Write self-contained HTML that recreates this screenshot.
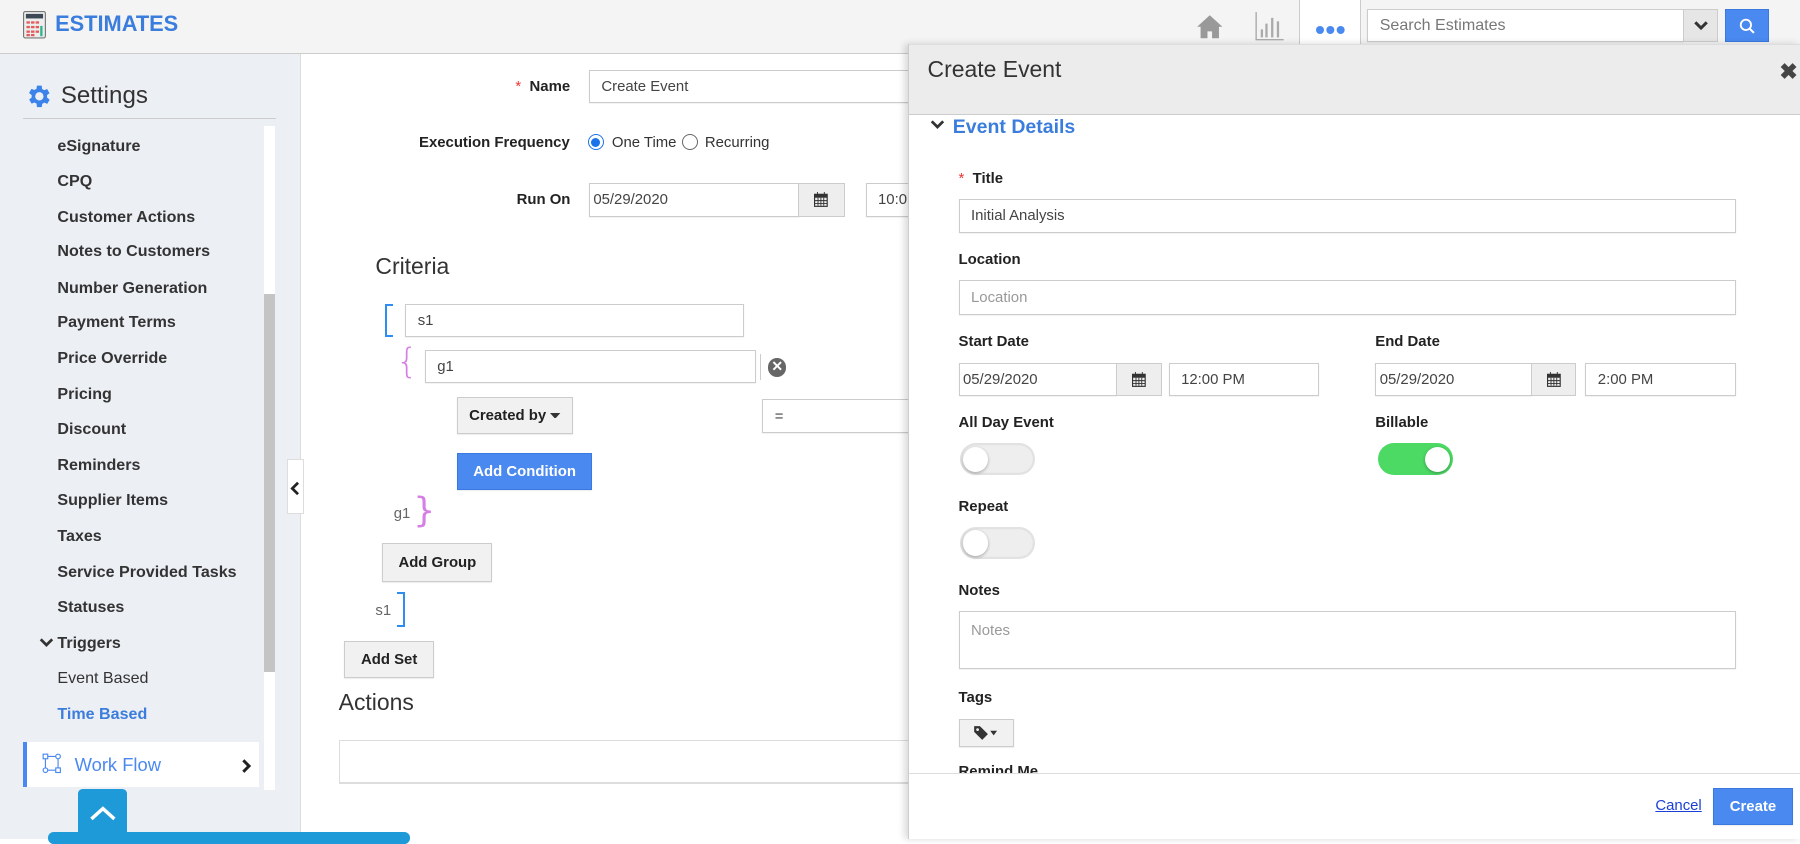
<!DOCTYPE html>
<html><head><meta charset="utf-8">
<style>
html{zoom:1.14796}
body{margin:0;width:1568px;height:731px;overflow:hidden;position:relative;font-family:"Liberation Sans",Arial,sans-serif;color:#333;background:#fff}
.a{position:absolute}
.lbl{font-weight:bold;font-size:13px;color:#222}
.inp{position:absolute;background:#fff;border:1px solid #ccc;box-sizing:border-box;font-size:13px;color:#444;padding-left:10px;display:flex;align-items:center;box-shadow:0 1px 1px rgba(0,0,0,.08)}
.btn{position:absolute;background:#f1f1f1;border:1px solid #ccc;box-sizing:border-box;font-size:13px;font-weight:bold;color:#222;display:flex;align-items:center;justify-content:center;box-shadow:0 1px 1px rgba(0,0,0,.1)}
.nav{position:absolute;left:50px;font-size:14px;font-weight:bold;color:#333}
.cal{position:absolute;background:#eee;border:1px solid #ccc;box-sizing:border-box;display:flex;align-items:center;justify-content:center}
.tog{position:absolute;width:66px;height:28px;border-radius:14px;background:#eee;box-shadow:inset 0 0 0 2px #e2e2e2}
.tog i{position:absolute;left:3px;top:3px;width:22px;height:22px;border-radius:50%;background:#fff;box-shadow:0 1px 3px rgba(0,0,0,.3)}
</style></head><body>
<div class="a" style="left:0;top:0;width:1568px;height:46px;background:#f4f4f4;border-bottom:1px solid #ccc"></div>
<svg class="a" style="left:20px;top:10px" width="20" height="24" viewBox="0 0 20 24"><rect x="0.5" y="0.5" width="19" height="23" rx="1.5" fill="#eee" stroke="#777"/><rect x="2.5" y="2.5" width="15" height="4" fill="#3d4a55"/><g fill="#e25c5c"><rect x="3" y="9" width="3" height="2"/><rect x="7" y="9" width="3" height="2"/><rect x="11" y="9" width="3" height="2"/><rect x="3" y="13" width="3" height="2"/><rect x="7" y="13" width="3" height="2"/><rect x="11" y="13" width="3" height="2"/><rect x="3" y="17" width="3" height="2"/><rect x="7" y="17" width="3" height="2"/><rect x="11" y="17" width="3" height="2"/><rect x="3" y="20" width="3" height="2"/><rect x="7" y="20" width="3" height="2"/></g><rect x="15" y="13" width="2" height="9" fill="#2bb58c"/></svg>
<div class="a" style="left:48px;top:10px;font-size:19px;font-weight:bold;color:#3b7ddd">ESTIMATES</div>
<svg class="a" style="left:1042px;top:11px" width="24" height="24" viewBox="0 0 24 24"><path d="M12 2L1 12h3v10h6v-6h4v6h6V12h3z" fill="#999"/></svg>
<svg class="a" style="left:1093px;top:10px" width="26" height="26" viewBox="0 0 26 26"><path d="M1 1v24h24" stroke="#aaa" fill="none" stroke-width="1.2"/><g fill="#aaa"><rect x="5" y="16" width="2" height="7"/><rect x="9" y="11" width="2" height="12"/><rect x="14" y="6" width="2" height="17"/><rect x="19" y="9" width="2" height="14"/></g></svg>
<div class="a" style="left:1132px;top:0;width:52px;height:46px;background:#fff;border-left:1px solid #ccc;border-right:1px solid #ccc"></div>
<div class="a" style="left:1146px;top:23px;width:7px;height:7px;border-radius:50%;background:#4a89f0;box-shadow:9px 0 0 #4a89f0,18px 0 0 #4a89f0"></div>
<div class="inp" style="left:1191px;top:8px;width:276px;height:29px;color:#777;font-size:14px">Search Estimates</div>
<div class="cal" style="left:1466px;top:8px;width:31px;height:29px;background:#e6e6e6"><svg width="14" height="10" viewBox="0 0 14 10"><path d="M2 2l5 5 5-5" stroke="#333" stroke-width="2.6" fill="none"/></svg></div>
<div class="a" style="left:1503px;top:8px;width:38px;height:29px;background:#4a89f0;border:1px solid #3b78e0;box-sizing:border-box;display:flex;align-items:center;justify-content:center"><svg width="14" height="14" viewBox="0 0 14 14"><circle cx="6" cy="6" r="4.5" stroke="#fff" stroke-width="1.6" fill="none"/><path d="M9.3 9.3L13 13" stroke="#fff" stroke-width="1.8"/></svg></div>

<div class="a" style="left:0;top:47px;width:261px;height:684px;background:#eceff4;border-right:1px solid #ddd"></div>
<svg class="a" style="left:22px;top:71px" width="25" height="25" viewBox="0 0 24 24"><path fill="#3b82ea" d="M19.4 13a7.5 7.5 0 000-2l2.1-1.6-2-3.5-2.5 1a7.6 7.6 0 00-1.7-1L15 3h-4l-.4 2.7a7.6 7.6 0 00-1.7 1l-2.5-1-2 3.5L6.6 11a7.5 7.5 0 000 2l-2.1 1.6 2 3.5 2.5-1c.5.4 1.1.8 1.700 1L11 21h4l.4-2.7c.6-.3 1.2-.6 1.7-1l2.5 1 2-3.5zM13 15.5a3.5 3.5 0 110-7 3.5 3.5 0 010 7z" transform="translate(-1 0)"/></svg>
<div class="a" style="left:53px;top:71px;font-size:21px;color:#333">Settings</div>
<div class="a" style="left:20px;top:103px;width:220px;height:1px;background:#ccc"></div>
<div class="a" style="left:230px;top:110px;width:10px;height:578px;background:#fff"></div>
<div class="a" style="left:230px;top:256px;width:10px;height:329px;background:#c4c4c4"></div>
<div class="nav" style="top:119px">eSignature</div>
<div class="nav" style="top:150px">CPQ</div>
<div class="nav" style="top:181px">Customer Actions</div>
<div class="nav" style="top:211px">Notes to Customers</div>
<div class="nav" style="top:243px">Number Generation</div>
<div class="nav" style="top:273px">Payment Terms</div>
<div class="nav" style="top:304px">Price Override</div>
<div class="nav" style="top:335px">Pricing</div>
<div class="nav" style="top:366px">Discount</div>
<div class="nav" style="top:397px">Reminders</div>
<div class="nav" style="top:428px">Supplier Items</div>
<div class="nav" style="top:459px">Taxes</div>
<div class="nav" style="top:490px">Service Provided Tasks</div>
<div class="nav" style="top:521px">Statuses</div>
<svg class="a" style="left:34px;top:555px" width="13" height="10" viewBox="0 0 13 10"><path d="M1.5 2l5 5 5-5" stroke="#333" stroke-width="2.4" fill="none"/></svg>
<div class="nav" style="top:552px">Triggers</div>
<div class="nav" style="top:583px;font-weight:normal">Event Based</div>
<div class="nav" style="top:614px;color:#3b7ddd">Time Based</div>
<div class="a" style="left:20px;top:646px;width:206px;height:40px;background:#fff;border-left:4px solid #4a89f0;box-sizing:border-box"></div>
<svg class="a" style="left:37px;top:656px" width="17" height="18" viewBox="0 0 17 18"><g stroke="#4a89f0" fill="none" stroke-width="1"><rect x="1" y="1" width="4" height="4"/><circle cx="14" cy="3" r="2"/><circle cx="3" cy="15" r="2"/><rect x="12" y="13" width="4" height="4"/><path d="M5 3h7M3 5v8M14 5v8M5 15h7"/></g></svg>
<div class="a" style="left:65px;top:657px;font-size:16px;color:#4a89f0">Work Flow</div>
<svg class="a" style="left:210px;top:660px" width="10" height="14" viewBox="0 0 10 14"><path d="M2 2l5 5-5 5" stroke="#222" stroke-width="2.6" fill="none"/></svg>
<div class="a" style="left:68px;top:687px;width:43px;height:44px;background:#1e9ad9;border-radius:4px 4px 0 0"></div>
<svg class="a" style="left:77px;top:700px" width="26" height="16" viewBox="0 0 26 16"><path d="M3 13l10-9 10 9" stroke="#fff" stroke-width="3" fill="none"/></svg>
<div class="a" style="left:42px;top:725px;width:315px;height:10px;background:#1e9ad9;border-radius:5px"></div>
<div class="a" style="left:250px;top:400px;width:15px;height:48px;background:#fff;border:1px solid #ddd;box-sizing:border-box"></div>
<svg class="a" style="left:253px;top:419px" width="10" height="13" viewBox="0 0 10 13"><path d="M7 1.5l-5 5 5 5" stroke="#222" stroke-width="2.4" fill="none"/></svg>

<div class="a lbl" style="left:449px;top:68px"><span style="color:#e33;font-weight:normal">*</span>&nbsp; Name</div>
<div class="inp" style="left:513px;top:61px;width:300px;height:29px">Create Event</div>
<div class="a lbl" style="left:365px;top:117px">Execution Frequency</div>
<div class="a" style="left:512px;top:117px;width:14px;height:14px;border-radius:50%;border:1px solid #1a73e8;box-sizing:border-box;background:#fff"><div style="margin:2px;width:8px;height:8px;border-radius:50%;background:#1a73e8"></div></div>
<div class="a" style="left:533px;top:117px;font-size:13px;color:#333">One Time</div>
<div class="a" style="left:594px;top:117px;width:14px;height:14px;border-radius:50%;border:1px solid #666;box-sizing:border-box;background:#fff"></div>
<div class="a" style="left:614px;top:117px;font-size:13px;color:#333">Recurring</div>
<div class="a lbl" style="left:450px;top:166px">Run On</div>
<div class="inp" style="left:513px;top:159px;width:183px;height:30px;padding-left:3px">05/29/2020</div>
<div class="cal" style="left:695px;top:159px;width:41px;height:30px"><svg width="12" height="13" viewBox="0 0 12 13"><rect x="0.5" y="2" width="11" height="10.5" fill="none" stroke="#333"/><rect x="0.5" y="2" width="11" height="3" fill="#333"/><path d="M3 0v3M9 0v3M0.5 7.5h11M0.5 10h11M3.5 5v7M6 5v7M8.5 5v7" stroke="#333" stroke-width=".8"/></svg></div>
<div class="inp" style="left:754px;top:159px;width:60px;height:30px">10:0</div>
<div class="a" style="left:327px;top:220px;font-size:20px;color:#333">Criteria</div>
<div class="a" style="left:335px;top:265px;height:29px;border:2.5px solid #2f8cf0;border-right:none;box-sizing:border-box;width:7px"></div>
<div class="inp" style="left:353px;top:265px;width:295px;height:29px">s1</div>
<div class="a" style="left:345px;top:298px;font-size:30px;color:#d77de6;font-family:'DejaVu Sans',sans-serif;font-weight:300">{</div>
<div class="inp" style="left:370px;top:305px;width:289px;height:29px">g1</div>
<div class="a" style="left:662px;top:308px;width:1px;height:23px;background:#ccc"></div>
<div class="a" style="left:669px;top:312px;width:16px;height:16px;border-radius:50%;background:#666;color:#fff;font-size:12px;font-weight:bold;text-align:center;line-height:16px">✕</div>
<div class="btn" style="left:398px;top:346px;width:101px;height:32px">Created by&nbsp;<svg width="9" height="5" viewBox="0 0 9 5"><path d="M0 0h9L4.5 5z" fill="#333"/></svg></div>
<div class="inp" style="left:664px;top:348px;width:130px;height:29px">=</div>
<div class="btn" style="left:398px;top:395px;width:118px;height:32px;background:#4a89f0;border-color:#3b78e0;color:#fff">Add Condition</div>
<div class="a" style="left:343px;top:440px;font-size:13px;color:#666">g1</div>
<div class="a" style="left:360px;top:428px;font-size:30px;color:#d77de6;font-family:'DejaVu Sans',sans-serif">}</div>
<div class="btn" style="left:333px;top:473px;width:96px;height:34px">Add Group</div>
<div class="a" style="left:327px;top:524px;font-size:13px;color:#666">s1</div>
<div class="a" style="left:346px;top:516px;width:7px;height:30px;border:2.5px solid #2f8cf0;border-left:none;box-sizing:border-box"></div>
<div class="btn" style="left:300px;top:558px;width:78px;height:33px">Add Set</div>
<div class="a" style="left:295px;top:600px;font-size:20px;color:#333">Actions</div>
<div class="a" style="left:295px;top:645px;width:520px;height:38px;border:1px solid #ddd;border-bottom:2px solid #ddd;box-sizing:border-box"></div>

<div class="a" style="left:791px;top:38px;width:777px;height:693px;background:#fff;border-left:1px solid #ccc;box-shadow:-3px 0 6px rgba(0,0,0,.15)"></div>
<div class="a" style="left:792px;top:38px;width:776px;height:62px;background:#ececec;border-bottom:1px solid #ccc;border-top:1px solid #ddd;box-sizing:border-box"></div>
<div class="a" style="left:808px;top:49px;font-size:20px;color:#333">Create Event</div>
<div class="a" style="left:1550px;top:51px;font-size:19px;font-weight:bold;color:#444">✖</div>
<svg class="a" style="left:810px;top:104px" width="13" height="10" viewBox="0 0 13 10"><path d="M1.5 2l5 5 5-5" stroke="#333" stroke-width="2.4" fill="none"/></svg>
<div class="a" style="left:830px;top:101px;font-size:17px;font-weight:bold;color:#3b7ddd">Event Details</div>
<div class="a lbl" style="left:835px;top:148px"><span style="color:#e33;font-weight:normal">*</span>&nbsp; Title</div>
<div class="inp" style="left:835px;top:173px;width:677px;height:30px">Initial Analysis</div>
<div class="a lbl" style="left:835px;top:219px">Location</div>
<div class="inp" style="left:835px;top:244px;width:677px;height:30px;color:#999">Location</div>
<div class="a lbl" style="left:835px;top:290px">Start Date</div>
<div class="a lbl" style="left:1198px;top:290px">End Date</div>
<div class="inp" style="left:835px;top:316px;width:138px;height:29px;padding-left:3px">05/29/2020</div>
<div class="cal" style="left:972px;top:316px;width:40px;height:29px"><svg width="12" height="13" viewBox="0 0 12 13"><rect x="0.5" y="2" width="11" height="10.5" fill="none" stroke="#333"/><rect x="0.5" y="2" width="11" height="3" fill="#333"/><path d="M3 0v3M9 0v3M0.5 7.5h11M0.5 10h11M3.5 5v7M6 5v7M8.5 5v7" stroke="#333" stroke-width=".8"/></svg></div>
<div class="inp" style="left:1018px;top:316px;width:131px;height:29px">12:00 PM</div>
<div class="inp" style="left:1198px;top:316px;width:137px;height:29px;padding-left:3px">05/29/2020</div>
<div class="cal" style="left:1334px;top:316px;width:39px;height:29px"><svg width="12" height="13" viewBox="0 0 12 13"><rect x="0.5" y="2" width="11" height="10.5" fill="none" stroke="#333"/><rect x="0.5" y="2" width="11" height="3" fill="#333"/><path d="M3 0v3M9 0v3M0.5 7.5h11M0.5 10h11M3.5 5v7M6 5v7M8.5 5v7" stroke="#333" stroke-width=".8"/></svg></div>
<div class="inp" style="left:1381px;top:316px;width:131px;height:29px">2:00 PM</div>
<div class="a lbl" style="left:835px;top:361px">All Day Event</div>
<div class="a lbl" style="left:1198px;top:361px">Billable</div>
<div class="tog" style="left:836px;top:386px"><i></i></div>
<div class="tog" style="left:1200px;top:386px;background:#4cd964;box-shadow:none"><i style="left:41px"></i></div>
<div class="a lbl" style="left:835px;top:434px">Repeat</div>
<div class="tog" style="left:836px;top:459px"><i></i></div>
<div class="a lbl" style="left:835px;top:507px">Notes</div>
<div class="inp" style="left:835px;top:532px;width:677px;height:51px;align-items:flex-start;padding-top:9px;color:#999">Notes</div>
<div class="a lbl" style="left:835px;top:600px">Tags</div>
<div class="btn" style="left:835px;top:626px;width:48px;height:25px"><svg width="22" height="14" viewBox="0 0 22 14"><path d="M1 1h5l7 7-5 5-7-7z" fill="#333"/><circle cx="4" cy="4" r="1.2" fill="#f1f1f1"/><path d="M15 5h6l-3 4z" fill="#333"/></svg></div>
<div class="a lbl" style="left:835px;top:665px;height:8px;overflow:hidden">Remind Me</div>
<div class="a" style="left:792px;top:673px;width:776px;height:1px;background:#ddd"></div>
<div class="a" style="left:1442px;top:694px;font-size:13px;color:#1a3fd6;text-decoration:underline">Cancel</div>
<div class="btn" style="left:1492px;top:686px;width:70px;height:33px;background:#4a89f0;border-color:#3b78e0;color:#fff">Create</div>
</body></html>
